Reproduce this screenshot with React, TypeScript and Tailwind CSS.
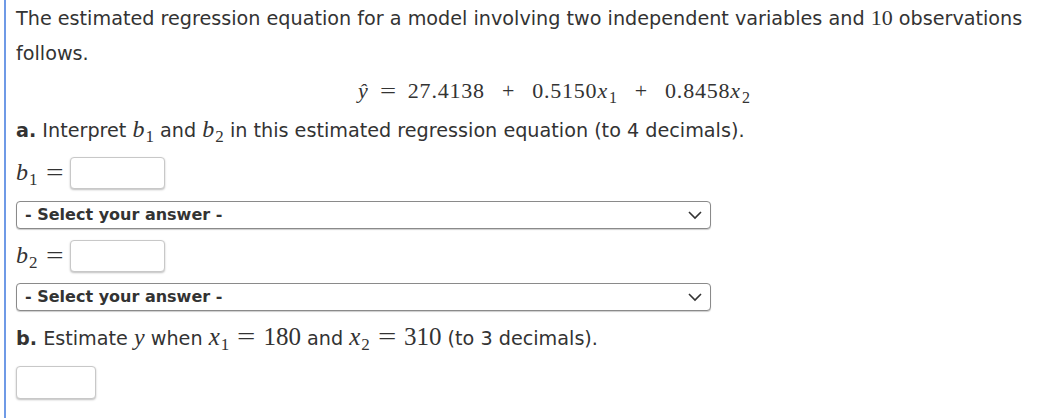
import React from "react";

const sans = { fontFamily: '"DejaVu Sans", Verdana, sans-serif' };
const serif = { fontFamily: '"Liberation Serif", "DejaVu Serif", serif' };

function MI({ children }: { children: React.ReactNode }) {
  return (
    <span className="italic" style={serif}>
      {children}
    </span>
  );
}
function MN({ children }: { children: React.ReactNode }) {
  return <span style={serif}>{children}</span>;
}
function Sub({ children }: { children: React.ReactNode }) {
  return (
    <span className="relative top-[5px] ml-[1px] text-[16px]" style={serif}>
      {children}
    </span>
  );
}
function SubL({ children }: { children: React.ReactNode }) {
  return (
    <span className="relative top-[5px] ml-[1px] text-[17px]" style={serif}>
      {children}
    </span>
  );
}

function Input({ w }: { w: string }) {
  return (
    <div className={`${w} rounded-[4px] border border-[#c8c8c8] bg-white shadow-[0_1px_2px_rgba(0,0,0,0.25)]`} />
  );
}

function Select() {
  return (
    <div className="flex h-[28px] w-[695px] items-center justify-between rounded-[4px] border border-[#8a8a8a] bg-white pl-[8px] pr-[6px] shadow-[0_1px_1px_rgba(0,0,0,0.2)]">
      <span className="text-[16px] font-bold text-[#333]" style={sans}>
        - Select your answer -
      </span>
      <svg width="18" height="12" viewBox="0 0 18 12">
        <path d="M3 3 L9 9 L15 3" fill="none" stroke="#333" strokeWidth="1.6" />
      </svg>
    </div>
  );
}

function Eq() {
  return (
    <span className="mx-[10px] inline-block scale-x-[1.3]" style={serif}>
      =
    </span>
  );
}

function BRow({ n }: { n: string }) {
  return (
    <div className="flex h-[32px] items-center">
      <span className="w-[54px] whitespace-nowrap text-[24px] leading-[32px]">
        <MI>b</MI>
        <SubL>{n}</SubL>
        <span className="ml-[10px] inline-block scale-x-[1.3]" style={serif}>
          =
        </span>
      </span>
      <Input w="w-[95px] h-[32px]" />
    </div>
  );
}

export default function App() {
  return (
    <div className="h-[418px] w-[1064px] bg-white text-[#333]" style={sans}>
      <div className="ml-[4px] h-full border-l-2 border-[#6f9ae6] pl-[10px] text-[19.2px]">
        <p className="w-[1045px] leading-[35px]">
          The estimated regression equation for a model involving two independent variables and{" "}
          <span className="text-[22px]" style={serif}>
            10
          </span>{" "}
          observations
          <br />
          follows.
        </p>
        <div className="mt-[3px] h-[34px] pl-[342px] text-[22px] leading-[34px] tracking-[0.8px]" style={serif}>
          <MI>ŷ</MI>
          <span className="mx-[13px] inline-block scale-x-[1.3]">=</span>
          <span>27.4138</span>
          <span className="mx-[17px]">+</span>
          <span>0.5150</span>
          <MI>x</MI>
          <Sub>1</Sub>
          <span className="mx-[17px]">+</span>
          <span>0.8458</span>
          <MI>x</MI>
          <Sub>2</Sub>
        </div>
        <p className="mt-[6px] h-[34px] leading-[34px]">
          <b>a.</b> Interpret{" "}
          <span className="text-[24px] leading-[20px]">
            <MI>b</MI>
            <SubL>1</SubL>
          </span>{" "}
          and{" "}
          <span className="text-[24px] leading-[20px]">
            <MI>b</MI>
            <SubL>2</SubL>
          </span>{" "}
          in this estimated regression equation (to 4 decimals).
        </p>
        <div className="mt-[9px]">
          <BRow n="1" />
        </div>
        <div className="mt-[12px]">
          <Select />
        </div>
        <div className="mt-[11px]">
          <BRow n="2" />
        </div>
        <div className="mt-[11px]">
          <Select />
        </div>
        <p className="mt-[11px] h-[34px] leading-[34px]">
          <b>b.</b> Estimate{" "}
          <span className="text-[24px] leading-[20px]">
            <MI>y</MI>
          </span>{" "}
          when{" "}
          <span className="text-[25px] leading-[20px]">
            <MI>x</MI>
            <SubL>1</SubL>
            <Eq />
            <MN>180</MN>
          </span>{" "}
          and{" "}
          <span className="text-[25px] leading-[20px]">
            <MI>x</MI>
            <SubL>2</SubL>
            <Eq />
            <MN>310</MN>
          </span>{" "}
          (to 3 decimals).
        </p>
        <div className="mt-[10px]">
          <Input w="w-[80px] h-[33px]" />
        </div>
      </div>
    </div>
  );
}
